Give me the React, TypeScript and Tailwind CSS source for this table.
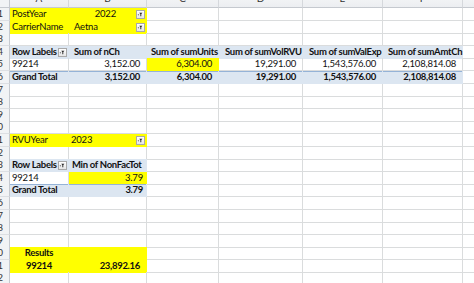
import React from "react";

type Fill = "y" | "b" | "bt";

interface Cell {
  t?: string;
  a?: "r" | "c";
  b?: boolean;
  f?: Fill;
  btn?: boolean;
  pad?: string;
}

const COLS = ["A", "B", "C", "D", "E", "F", ""];

const FONT = { fontFamily: "Lato, 'Liberation Sans', sans-serif" };

const e: Cell = {};

// 22 sheet rows, cells A..G
const rows: Cell[][] = [
  [{ t: "PostYear", f: "y" }, { t: "2022", a: "r", f: "y", btn: true, pad: "pr-[30px]" }],
  [{ t: "CarrierName", f: "y" }, { t: "Aetna", f: "y", btn: true, pad: "pl-[5px]" }],
  [],
  [
    { t: "Row Labels", b: true, f: "b", btn: true },
    { t: "Sum of nCh", b: true, f: "b", pad: "pl-[5px]" },
    { t: "Sum of sumUnits", b: true, f: "b", pad: "pl-[4px]" },
    { t: "Sum of sumVolRVU", b: true, f: "b", pad: "pl-[6px]" },
    { t: "Sum of sumValExp", b: true, f: "b", pad: "pl-[6px]" },
    { t: "Sum of sumAmtCh", b: true, f: "b", pad: "pl-[5px]" },
  ],
  [
    { t: "99214" },
    { t: "3,152.00", a: "r" },
    { t: "6,304.00", a: "r", f: "y" },
    { t: "19,291.00", a: "r" },
    { t: "1,543,576.00", a: "r" },
    { t: "2,108,814.08", a: "r" },
  ],
  [
    { t: "Grand Total", b: true, f: "bt" },
    { t: "3,152.00", a: "r", b: true, f: "bt" },
    { t: "6,304.00", a: "r", b: true, f: "bt" },
    { t: "19,291.00", a: "r", b: true, f: "bt" },
    { t: "1,543,576.00", a: "r", b: true, f: "bt" },
    { t: "2,108,814.08", a: "r", b: true, f: "bt" },
  ],
  [],
  [],
  [],
  [],
  [{ t: "RVUYear", f: "y" }, { t: "2023", f: "y", btn: true }],
  [],
  [
    { t: "Row Labels", b: true, f: "b", btn: true },
    { t: "Min of NonFacTot", b: true, f: "b", pad: "pl-[3px]" },
  ],
  [{ t: "99214" }, { t: "3.79", a: "r", f: "y", pad: "pr-[3px]" }],
  [
    { t: "Grand Total", b: true, f: "bt" },
    { t: "3.79", a: "r", b: true, f: "bt", pad: "pr-[3px]" },
  ],
  [],
  [],
  [],
  [],
  [{ t: "Results", a: "c", b: true, f: "y" }, { f: "y" }],
  [
    { t: "99214", a: "c", b: true, f: "y" },
    { t: "23,892.16", a: "r", b: true, f: "y" },
  ],
  [],
];

const FilterButton: React.FC = () => (
  <span className="absolute right-[1px] bottom-[1px] h-[9px] w-[9px] border border-[#a9a9a9] bg-gradient-to-b from-white to-[#e6e6e6]">
    <svg viewBox="0 0 9 9" className="block h-full w-full">
      <path d="M2.8 2.2h4.2L5.5 4v2.6H4.3V4z" fill="#222" />
      <path d="M0.8 4.6h2L1.8 5.8z" fill="#222" />
    </svg>
  </span>
);

const fillClass = (f?: Fill) => {
  if (f === "y") return "bg-[#ffff00] border-[#ffff00]";
  if (f === "b") return "bg-[#dce6f1] border-[#dce6f1]";
  if (f === "bt") return "bg-[#dce6f1] border-[#dce6f1] shadow-[inset_0_1px_0_#95b3d7]";
  return "border-[#dadcdd]";
};

const SheetCell: React.FC<{ c: Cell }> = ({ c }) => {
  const align = c.a === "r" ? "justify-end" : c.a === "c" ? "justify-center" : "justify-start";
  const pad = c.pad ?? (c.a === "r" ? "pr-[6px]" : c.a === "c" ? "" : "pl-[2px]");
  const weight = c.b ? "font-bold tracking-[-0.3px]" : "tracking-[-0.2px]";
  return (
    <div
      className={`relative flex items-end overflow-visible whitespace-nowrap border-r border-b pb-[1px] leading-[11px] ${align} ${pad} ${fillClass(c.f)} ${weight}`}
    >
      {c.t}
      {c.btn && <FilterButton />}
    </div>
  );
};

const GRID = "grid grid-cols-[22px_59px_78px_72px_84px_80px_80px_60px]";

export default function App() {
  return (
    <div className="h-[283px] w-[474px] overflow-hidden bg-white text-[9.5px] text-[#111]" style={FONT}>
      <div className="-mt-[9px] -ml-[12px]">
        {/* column headers */}
        <div className={`${GRID} h-[17px]`}>
          <div className="border-r border-b border-[#c5c9cf] bg-[#f1f3f5]" />
          {COLS.map((l, i) => (
            <div
              key={i}
              className="flex items-end justify-center border-r border-b border-r-[#d5d8dc] border-b-[#c5c9cf] bg-gradient-to-b from-[#f8f9fa] to-[#eceef1] pb-[4px] text-[10px] leading-none text-[#333]"
            >
              {l}
            </div>
          ))}
        </div>

        {rows.map((r, ri) => (
          <div key={ri} className={`${GRID} h-[12.6px]`}>
            <div className="flex items-end justify-end border-r border-b border-r-[#c5c9cf] border-b-[#dcdfe3] bg-[#f1f3f5] pr-[6px] pb-[1px] leading-[11px] text-[#333]">
              {ri + 1}
            </div>
            {COLS.map((_, ci) => (
              <SheetCell key={ci} c={r[ci] ?? e} />
            ))}
          </div>
        ))}
      </div>
    </div>
  );
}
